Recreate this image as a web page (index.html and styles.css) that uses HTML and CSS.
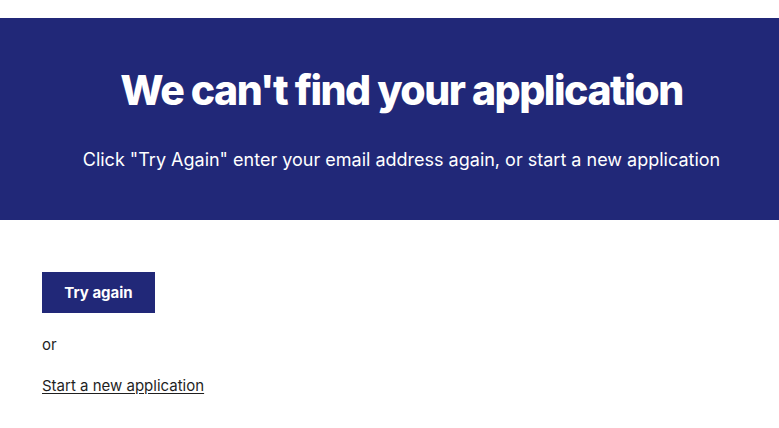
FILE: index.html
```html
<!DOCTYPE html>
<html>
<head>
<meta charset="utf-8">
<link rel="stylesheet" href="styles.css">
</head>
<body>
<header class="banner">
  <h1 class="title">We can't find your application</h1>
  <p class="subtitle">Click "Try Again" enter your email address again, or start a new application</p>
</header>
<main class="content">
  <button class="btn">Try again</button>
  <p class="or">or</p>
  <a class="link" href="#">Start a new application</a>
</main>
</body>
</html>
```

FILE: styles.css
```css
html, body {
  margin: 0;
  padding: 0;
  background: #ffffff;
  font-family: Inter, "Noto Sans", sans-serif;
  color: #1f1f1f;
}
.banner {
  margin-top: 18px;
  height: 202px;
  background: #212878;
  color: #ffffff;
  display: flex;
  flex-direction: column;
  align-items: center;
  box-sizing: border-box;
  padding: 48px 0 0 24px;
}
.title {
  margin: 0;
  font-size: 41px;
  font-weight: 800;
  line-height: 48px;
  letter-spacing: -1.5px;
}
.subtitle {
  margin: 34px 0 0;
  font-size: 18px;
  line-height: 24px;
  font-weight: 400;
}
.content {
  padding: 52px 42px 0;
  display: flex;
  flex-direction: column;
  align-items: flex-start;
}
.btn {
  background: #212878;
  color: #ffffff;
  border: 0;
  width: 113px;
  height: 41px;
  font-family: Inter, sans-serif;
  font-weight: 700;
  font-size: 15px;
  padding: 0;
  cursor: pointer;
}
.or {
  margin: 22px 0 0;
  font-size: 15px;
  line-height: 20px;
}
.link {
  margin-top: 21px;
  font-size: 15px;
  line-height: 20px;
  color: #1f1f1f;
  text-decoration: underline;
  text-underline-offset: 2px;
}
```
